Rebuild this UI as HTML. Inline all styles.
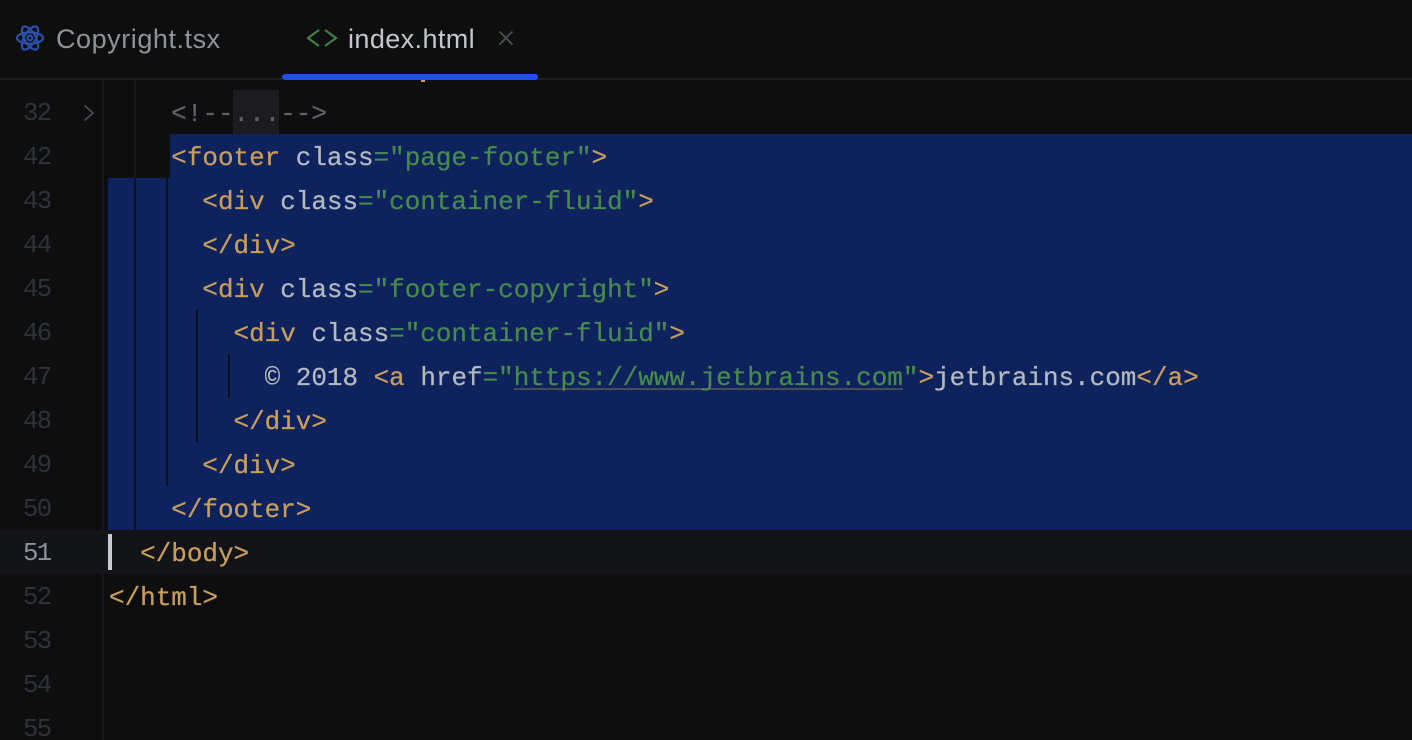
<!DOCTYPE html>
<html>
<head>
<meta charset="utf-8">
<style>
html,body{margin:0;padding:0;background:#0e0e0e;}
#app{position:relative;width:1412px;height:740px;overflow:hidden;background:#0e0e0e;}
.abs{position:absolute;}
.code{position:absolute;left:109px;white-space:pre;font-family:"Liberation Mono",monospace;font-size:25.95px;line-height:44px;height:44px;color:#b4b8bf;-webkit-text-stroke:0.25px currentColor;}
.num{position:absolute;left:23px;white-space:pre;font-family:"Liberation Mono",monospace;font-size:25.67px;letter-spacing:-1.7px;line-height:44px;height:44px;color:#2f323a;}
.t{color:#c99e5a;}
.g{color:#468a4d;}
.c{color:#5f6166;}
.w{color:#b4b8bf;}
.tab{position:absolute;font-family:"Liberation Sans",sans-serif;font-size:27px;line-height:40px;white-space:pre;}
.guide{position:absolute;width:2px;background:#0c0f1c;}
</style>
</head>
<body>
<div id="app">
<!-- tab bar -->
<div class="abs" style="left:0;top:78px;width:1412px;height:2px;background:#1c1c22;"></div>
<svg class="abs" style="left:15px;top:23px" width="30" height="30" viewBox="0 0 30 30" fill="none" stroke="#2a50a8" stroke-width="2.2">
<ellipse cx="15" cy="15" rx="13" ry="5.6"/>
<ellipse cx="15" cy="15" rx="13" ry="5.6" transform="rotate(60 15 15)"/>
<ellipse cx="15" cy="15" rx="13" ry="5.6" transform="rotate(120 15 15)"/>
<circle cx="15" cy="15" r="2.4"/>
</svg>
<div class="tab" style="left:56px;top:19px;color:#8f9297;letter-spacing:0.55px;">Copyright.tsx</div>
<svg class="abs" style="left:306px;top:27px" width="32" height="22" viewBox="0 0 32 22" fill="none" stroke="#3f8143" stroke-width="2.2">
<path d="M13 3 L2 11 L13 19"/>
<path d="M19 3 L30 11 L19 19"/>
</svg>
<div class="tab" style="left:348px;top:19px;color:#c3c6cc;letter-spacing:0.4px;">index.html</div>
<svg class="abs" style="left:498px;top:30px" width="16" height="16" viewBox="0 0 16 16" fill="none" stroke="#4a4c55" stroke-width="1.9">
<path d="M1.5 1.5 L14.5 14.5 M14.5 1.5 L1.5 14.5"/>
</svg>
<div class="abs" style="left:421px;top:80px;width:4px;height:2px;background:#c99e5a;"></div>
<div class="abs" style="left:282px;top:74px;width:256px;height:6px;border-radius:3px;background:#1f50ee;"></div>

<!-- gutter divider -->
<div class="abs" style="left:102px;top:80px;width:2px;height:660px;background:#16161b;"></div>
<div class="abs" style="left:134px;top:80px;width:2px;height:98px;background:#16161b;"></div>
<!-- current line -->
<div class="abs" style="left:0;top:530px;width:1412px;height:44px;background:#131417;"></div>
<!-- selection -->
<div class="abs" style="left:170px;top:134px;width:1242px;height:44px;background:#0e235d;"></div>
<div class="abs" style="left:108px;top:178px;width:1304px;height:352px;background:#0e235d;"></div>
<!-- indent guides -->
<div class="guide" style="left:134px;top:178px;height:352px;"></div>
<div class="guide" style="left:166px;top:178px;height:308px;"></div>
<div class="guide" style="left:196px;top:310px;height:132px;"></div>
<div class="guide" style="left:228px;top:354px;height:44px;"></div>
<!-- fold placeholder -->
<div class="abs" style="left:233px;top:90px;width:46px;height:44px;background:#1c1c20;"></div>
<!-- caret -->
<div class="abs" style="left:108px;top:534px;width:4px;height:36px;background:#c8c9d2;"></div>
<!-- fold chevron -->
<svg class="abs" style="left:82px;top:104px" width="14" height="18" viewBox="0 0 14 18" fill="none" stroke="#4b4d55" stroke-width="1.7">
<path d="M2.5 1.5 L11 9 L2.5 16.5"/>
</svg>

<!-- line numbers -->
<div class="num" style="top:92px">32</div>
<div class="num" style="top:136px">42</div>
<div class="num" style="top:180px">43</div>
<div class="num" style="top:224px">44</div>
<div class="num" style="top:268px">45</div>
<div class="num" style="top:312px">46</div>
<div class="num" style="top:356px">47</div>
<div class="num" style="top:400px">48</div>
<div class="num" style="top:444px">49</div>
<div class="num" style="top:488px">50</div>
<div class="num" style="top:532px;color:#8f929a">51</div>
<div class="num" style="top:576px">52</div>
<div class="num" style="top:620px">53</div>
<div class="num" style="top:664px">54</div>
<div class="num" style="top:708px">55</div>

<!-- code -->
<div class="code" style="top:92px"><span class="c">    &lt;!--...--&gt;</span></div>
<div class="code" style="top:136px"><span class="t">    &lt;footer</span> class<span class="g">="page-footer"</span><span class="t">&gt;</span></div>
<div class="code" style="top:180px"><span class="t">      &lt;div</span> class<span class="g">="container-fluid"</span><span class="t">&gt;</span></div>
<div class="code" style="top:224px"><span class="t">      &lt;/div&gt;</span></div>
<div class="code" style="top:268px"><span class="t">      &lt;div</span> class<span class="g">="footer-copyright"</span><span class="t">&gt;</span></div>
<div class="code" style="top:312px"><span class="t">        &lt;div</span> class<span class="g">="container-fluid"</span><span class="t">&gt;</span></div>
<div class="code" style="top:356px">          © 2018 <span class="t">&lt;a</span> href<span class="g">="</span><span class="g" style="text-decoration:underline;text-decoration-color:#4a4c55;text-decoration-thickness:2px;text-underline-offset:3px;text-decoration-skip-ink:none;">https://www.jetbrains.com</span><span class="g">"</span><span class="t">&gt;</span>jetbrains.com<span class="t">&lt;/a&gt;</span></div>
<div class="code" style="top:400px"><span class="t">        &lt;/div&gt;</span></div>
<div class="code" style="top:444px"><span class="t">      &lt;/div&gt;</span></div>
<div class="code" style="top:488px"><span class="t">    &lt;/footer&gt;</span></div>
<div class="code" style="top:532px"><span class="t">  &lt;/body&gt;</span></div>
<div class="code" style="top:576px"><span class="t">&lt;/html&gt;</span></div>
</div>
</body>
</html>
